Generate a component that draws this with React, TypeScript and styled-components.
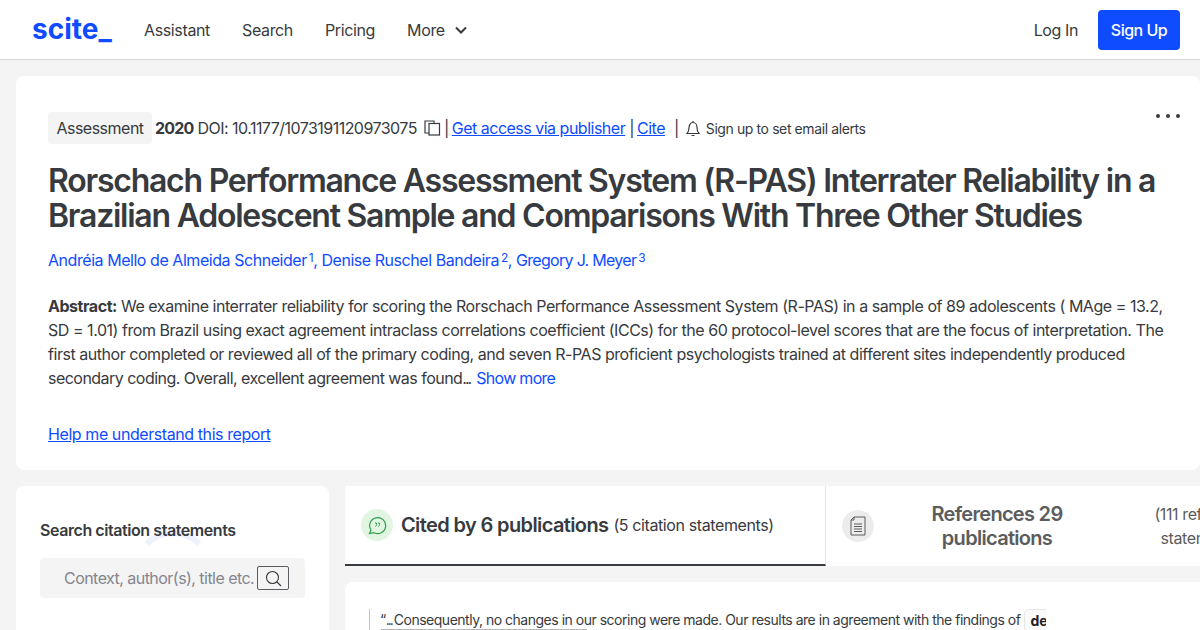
import React from "react";
import styled, { createGlobalStyle } from "styled-components";

const Global = createGlobalStyle`
  html, body { margin: 0; padding: 0; height: 630px; overflow: hidden; background: #f4f4f4; }
  body { font-family: Inter, "Liberation Sans", sans-serif; color: #373a3e; }
  * { box-sizing: border-box; }
`;
const Page = styled.div`width: 1200px; height: 630px; overflow: hidden; display: flex; flex-direction: column;`;
const Header = styled.header`
  height: 60px; flex: none; background: #fff; border-bottom: 1px solid #d8d8d8;
  display: flex; align-items: center; padding: 0 20px 0 32px;
`;
const Logo = styled.div`
  font-size: 28px; font-weight: 700; color: #0f4bff; width: 112px; line-height: 60px; margin-top: -2px;
`;
const NavLinks = styled.nav`display: flex; gap: 32px; align-items: center; font-size: 16px; color: #373a3e; flex: 1; letter-spacing: -0.36px;`;
const NavItem = styled.span`display: flex; align-items: center; gap: 10px;`;
const LogIn = styled.span`font-size: 16px; margin-right: 20px; letter-spacing: -0.4px;`;
const SignUp = styled.button`
  width: 82px; height: 40px; border: 0; border-radius: 4px; background: #0f4bff; color: #fff;
  font: 500 16px Inter, sans-serif; padding: 0; letter-spacing: -0.5px;
`;
const Main = styled.main`padding: 16px 0 0 16px; display: flex; flex-direction: column; gap: 16px;`;
const Card = styled.section`
  position: relative; height: 394px; background: #fff; border-radius: 8px; padding: 36px 32px 0;
`;
const More = styled.div`position: absolute; top: 38px; right: 20px; display: flex; gap: 6px;`;
const Dot = styled.i`display: block; width: 4px; height: 4px; border-radius: 50%; background: #373a3e;`;
const Meta = styled.div`display: flex; align-items: center; font-size: 16px; height: 32px; white-space: nowrap; letter-spacing: -0.5px;`;
const Tag = styled.span`
  height: 32px; width: 104px; display: flex; align-items: center; justify-content: center;
  background: #f4f4f4; border-radius: 4px; margin-right: 3px;
`;
const Year = styled.b`font-weight: 700; margin-right: 4px; letter-spacing: -0.8px;`;
const Doi = styled.span`letter-spacing: -0.53px;`;
const A = styled.a`color: #0f4bff; text-decoration: underline;`;
const Sep = styled.span<{ $l?: number; $r?: number }>`margin: 0 ${p => p.$r ?? 3}px 0 ${p => p.$l ?? 3}px;`;
const Alert = styled.span`font-size: 14px; letter-spacing: -0.4px; margin-left: 6px;`;
const Title = styled.h1`
  margin: 19px 0 0; font-size: 32px; line-height: 35px; font-weight: 600; letter-spacing: -1.25px; color: #373a3e; white-space: nowrap;
`;
const Authors = styled.div`margin-top: 15px; font-size: 16px; line-height: 24px; color: #0f4bff; white-space: nowrap; letter-spacing: -0.45px;`;
const Sup = styled.sup`font-size: 12px; line-height: 0; margin-left: 2px; vertical-align: 4px;`;
const LastAuthor = styled.span`letter-spacing: -0.7px;`;
const Abstract = styled.p`margin: 22px 0 0; font-size: 16px; line-height: 24px; white-space: nowrap; letter-spacing: -0.46px;`;
const LastLine = styled.span`letter-spacing: -0.53px;`;
const Dots = styled.span`letter-spacing: -2px; margin-right: 2px;`;
const ShowMore = styled.span`color: #0f4bff; letter-spacing: -0.7px;`;
const Help = styled.div`margin-top: 32px; font-size: 16px; line-height: 24px; letter-spacing: -0.42px;`;
const Row = styled.div`display: flex; gap: 16px; align-items: flex-start;`;
const Side = styled.aside`
  position: relative; width: 313px; height: 200px; flex: none; background: #fff; border-radius: 8px; padding: 32px 24px 0;
`;
const SideTitle = styled.div`position: relative; font-size: 16px; font-weight: 600; line-height: 24px; letter-spacing: -0.43px; white-space: nowrap;`;
const Spinner = styled.div`
  position: absolute; left: 117px; top: 44px; width: 80px; height: 80px; border-radius: 50%;
  border: 6px solid transparent; border-top-color: #edf2fd;
`;
const SearchBox = styled.div`
  position: relative; margin-top: 16px; height: 40px; background: #f4f4f4; border-radius: 4px;
  display: flex; align-items: center; padding: 0 16px 0 24px; justify-content: space-between;
`;
const Placeholder = styled.span`font-size: 16px; color: #85858f; white-space: nowrap; letter-spacing: -0.54px;`;
const SearchBtn = styled.span`
  width: 32px; height: 24px; flex: none; border: 1px solid #5a5d62; border-radius: 2px; display: flex; align-items: center; justify-content: center;
`;
const Right = styled.div`flex: none; width: 900px; display: flex; flex-direction: column; gap: 16px;`;
const Tabs = styled.div`display: flex; height: 80px; background: #fff;`;
const TabActive = styled.div`
  width: 481px; flex: none; height: 80px; border-bottom: 2px solid #373a3e; border-right: 1px solid #e4e4e4;
  display: flex; align-items: center; padding: 0 16px; white-space: nowrap; border-top-left-radius: 8px;
`;
const IconCircle = styled.span<{ $bg: string }>`
  width: 32px; height: 32px; border-radius: 50%; background: ${p => p.$bg}; display: flex; align-items: center; justify-content: center; flex: none;
`;
const TabStrong = styled.b`font-size: 20px; font-weight: 600; margin-left: 8px; letter-spacing: -0.62px;`;
const TabNote = styled.span`font-size: 16px; margin-left: 5px; letter-spacing: -0.39px;`;
const TabOther = styled.div`flex: none; width: 394px; height: 80px; display: flex; align-items: center; padding-left: 16px; color: #5c5c5c;`;
const TabLabel = styled.b`flex: none; width: 246px; text-align: center; font-size: 20px; line-height: 24px; font-weight: 600; letter-spacing: -0.7px;`;
const TabNoteWrap = styled.span`flex: none; font-size: 16px; line-height: 24px; width: 130px; text-align: center; margin-left: 18px; white-space: nowrap; letter-spacing: -0.4px;`;
const Quote = styled.div`background: #fff; height: 100px; border-radius: 8px; padding: 27px 24px 0;`;
const QuoteInner = styled.div`position: relative; border-left: 1px solid #c4c4c4; padding-left: 10px; font-size: 14px; line-height: 22px; white-space: nowrap; letter-spacing: -0.49px; height: 40px;
  &::after { content: ""; position: absolute; left: 11px; top: 20px; width: 206px; height: 1px; background: #b8b8b8; }
`;
const Chip = styled.b`
  display: inline-block; height: 24px; width: 22px; border: 1px solid #e8e8e8; border-right: 0; border-radius: 5px 0 0 5px; background: #fafafa;
  padding-left: 5px; margin-left: 4px; color: #222; font-weight: 700; overflow: hidden; vertical-align: top; letter-spacing: 0;
`;

export default function App() {
  return (
    <Page>
      <Global />
      <Header>
        <Logo>scite_</Logo>
        <NavLinks>
          <NavItem>Assistant</NavItem>
          <NavItem>Search</NavItem>
          <NavItem>Pricing</NavItem>
          <NavItem>
            More
            <svg width="12" height="8" viewBox="0 0 12 8" fill="none" stroke="#373a3e" strokeWidth="2"><path d="M1 1.500l5 5 5-5" /></svg>
          </NavItem>
        </NavLinks>
        <LogIn>Log In</LogIn>
        <SignUp>Sign Up</SignUp>
      </Header>
      <Main>
        <Card>
          <More><Dot /><Dot /><Dot /></More>
          <Meta>
            <Tag>Assessment</Tag>
            <Year>2020</Year>
            <Doi>DOI: 10.1177/1073191120973075</Doi>
            <svg style={{ marginLeft: 7 }} width="17" height="16" viewBox="0 0 17 16" fill="none" stroke="#373a3e" strokeWidth="1.200"><path d="M5 13H1V1h9v2" /><rect x="5" y="3.500" width="10.500" height="11.500" /></svg>
            <Sep>|</Sep>
            <A>Get access via publisher</A>
            <Sep $l={4} $r={3}>|</Sep>
            <A>Cite</A>
            <Sep $l={9} $r={7}>|</Sep>
            <svg width="14" height="17" viewBox="0 0 14 17" fill="none" stroke="#373a3e" strokeWidth="1.200"><path d="M1 13.500h12c-1.500-1.500-2-2.500-2-6 0-2.500-1.500-5-4-5s-4 2.500-4 5c0 3.500-.5 4.500-2 6zM5.500 15.500h3M7 1v1.500" /></svg>
            <Alert>Sign up to set email alerts</Alert>
          </Meta>
          <Title>
            Rorschach Performance Assessment System (R-PAS) Interrater Reliability in a<br />
            Brazilian Adolescent Sample and Comparisons With Three Other Studies
          </Title>
          <Authors>
            Andréia Mello de Almeida Schneider<Sup>1</Sup>, Denise Ruschel Bandeira<Sup>2</Sup>, <LastAuthor>Gregory J. Meyer</LastAuthor><Sup>3</Sup>
          </Authors>
          <Abstract>
            <b>Abstract:</b> We examine interrater reliability for scoring the Rorschach Performance Assessment System (R-PAS) in a sample of 89 adolescents ( MAge = 13.2,<br />
            SD = 1.01) from Brazil using exact agreement intraclass correlations coefficient (ICCs) for the 60 protocol-level scores that are the focus of interpretation. The<br />
            first author completed or reviewed all of the primary coding, and seven R-PAS proficient psychologists trained at different sites independently produced<br />
            <LastLine>secondary coding. Overall, excellent agreement was found</LastLine><Dots>...</Dots> <ShowMore>Show more</ShowMore>
          </Abstract>
          <Help><A>Help me understand this report</A></Help>
        </Card>
        <Row>
          <Side>
            <Spinner />
            <SideTitle>Search citation statements</SideTitle>
            <SearchBox>
              <Placeholder>Context, author(s), title etc.</Placeholder>
              <SearchBtn>
                <svg width="17" height="17" viewBox="0 0 17 17" fill="none" stroke="#373a3e" strokeWidth="1.100"><circle cx="7.500" cy="7.500" r="6" /><path d="M12 12l4 4" /></svg>
              </SearchBtn>
            </SearchBox>
          </Side>
          <Right>
            <Tabs>
              <TabActive>
                <IconCircle $bg="#e2f5e2">
                  <svg width="20" height="20" viewBox="0 0 20 20" fill="none" stroke="#2f9e4a" strokeWidth="1.200">
                    <path d="M2.500 18.500l1.500-3.500a8 8 0 1 1 3 2.700z" />
                    <path d="M8 8h1.500v1.500c0 1-.5 1.500-1 2M11 8h1.500v1.500c0 1-.5 1.500-1 2" strokeWidth="1" />
                  </svg>
                </IconCircle>
                <TabStrong>Cited by 6 publications</TabStrong>
                <TabNote>(5 citation statements)</TabNote>
              </TabActive>
              <TabOther>
                <IconCircle $bg="#ececec">
                  <svg width="18" height="20" viewBox="0 0 18 20" fill="none" stroke="#5c5c5c" strokeWidth="1">
                    <path d="M5 1h11v18H2V4zM5 1v3H2M5 8h8M5 10.500h8M5 13h8M5 15.500h8" />
                  </svg>
                </IconCircle>
                <TabLabel>References 29<br />publications</TabLabel>
                <TabNoteWrap>(111 reference<br />statements)</TabNoteWrap>
              </TabOther>
            </Tabs>
            <Quote>
              <QuoteInner>
                “<Dots>...</Dots>Consequently, no changes in our scoring were made. Our results are in agreement with the findings of<Chip>de</Chip>
              </QuoteInner>
            </Quote>
          </Right>
        </Row>
      </Main>
    </Page>
  );
}
